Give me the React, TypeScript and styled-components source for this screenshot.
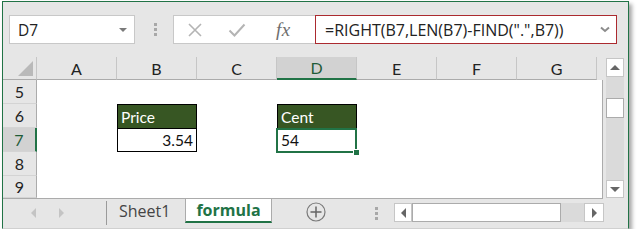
import React from 'react';
import styled, { createGlobalStyle } from 'styled-components';

const GREEN = '#217346';

const columns = ['A', 'B', 'C', 'D', 'E', 'F', 'G'];
const rows = [
  { n: 5, h: 24 },
  { n: 6, h: 24 },
  { n: 7, h: 24 },
  { n: 8, h: 24 },
  { n: 9, h: 22 },
];

type CellData = { text: string; kind: 'head' | 'value'; align?: 'left' | 'right' };

const cells: Record<string, CellData> = {
  B6: { text: 'Price', kind: 'head' },
  B7: { text: '3.54', kind: 'value', align: 'right' },
  D6: { text: 'Cent', kind: 'head' },
  D7: { text: '54', kind: 'value' },
};

const activeCol = 'D';
const activeRow = 7;

const GlobalStyle = createGlobalStyle`
  body {
    margin: 0;
    background: #fff;
    font-family: "Open Sans", "Noto Sans", sans-serif;
  }
  * { box-sizing: border-box; }
`;

const Window = styled.div`
  margin: 1px 0 0 2px;
  width: 627px;
  height: 228px;
  border: 1px solid ${GREEN};
  border-bottom: 1px solid #d0d0d0;
  background: #e6e6e6;
  box-shadow: 3px 3px 4px rgba(0, 0, 0, 0.35);
  display: flex;
  flex-direction: column;
`;

const FormulaBar = styled.div`
  height: 55px;
  display: flex;
  align-items: flex-start;
  padding: 13px 0 0 6px;
`;

const NameBox = styled.div`
  width: 126px;
  height: 29px;
  background: #fff;
  border: 1px solid #c8c8c8;
  display: flex;
  align-items: center;
  justify-content: space-between;
  padding: 0 7px 0 8px;
  font-size: 15.5px;
  color: #222;
`;

const Caret = styled.span`
  width: 0;
  height: 0;
  border-left: 4px solid transparent;
  border-right: 4px solid transparent;
  border-top: 4px solid #7a7a7a;
`;

const Grip = styled.div<{ $gap: number }>`
  display: flex;
  flex-direction: column;
  gap: 2px;
  margin: 8px 0 0 ${p => p.$gap}px;
  & > span {
    width: 3px;
    height: 3px;
    background: #a8a8a8;
  }
`;

const FxBox = styled.div`
  width: 142px;
  height: 29px;
  margin-left: 16px;
  background: #fff;
  border: 1px solid #c8c8c8;
  border-right: none;
  display: flex;
  align-items: center;
  padding-left: 13px;
`;

const IconSlot = styled.span<{ $w: number }>`
  width: ${p => p.$w}px;
  display: flex;
  align-items: center;
`;

const Fx = styled.span`
  font-family: "Liberation Serif", "DejaVu Serif", serif;
  font-style: italic;
  font-size: 19px;
  color: #6e6e6e;
  letter-spacing: 0.5px;
`;

const FormulaInput = styled.div`
  width: 302px;
  height: 29px;
  background: #fff;
  border: 1px solid #ab2a2f;
  display: flex;
  align-items: center;
  justify-content: space-between;
  padding: 0 6px 0 9px;
  font-size: 16px;
  color: #222;
`;

const Main = styled.div`
  height: 142px;
  display: flex;
`;

const Sheet = styled.div`
  width: 600px;
  display: flex;
  flex-direction: column;
`;

const HeaderRow = styled.div`
  height: 23px;
  display: flex;
`;

const Corner = styled.div`
  width: 34px;
  border-right: 1px solid #c6c6c6;
  border-bottom: 1px solid #ababab;
  position: relative;
  overflow: hidden;
  &::after {
    content: '';
    position: absolute;
    right: 3px;
    bottom: 3px;
    border-left: 15px solid transparent;
    border-bottom: 15px solid #b9b9b9;
  }
`;

const ColHeader = styled.div<{ $active: boolean }>`
  width: 80px;
  display: flex;
  align-items: center;
  justify-content: center;
  font-family: Lato, "Liberation Sans", sans-serif;
  font-size: 16px;
  color: ${p => (p.$active ? '#1f5c38' : '#222')};
  background: ${p => (p.$active ? '#d2d2d2' : '#e6e6e6')};
  border-right: 1px solid #c6c6c6;
  border-bottom: ${p => (p.$active ? `2px solid ${GREEN}` : '1px solid #ababab')};
`;

const HeaderFiller = styled.div`
  flex: 1;
`;

const Body = styled.div`
  flex: 1;
  display: flex;
  border-bottom: 1px solid #ababab;
`;

const RowHeaders = styled.div`
  width: 34px;
  display: flex;
  flex-direction: column;
`;

const RowHeader = styled.div<{ $h: number; $active: boolean }>`
  height: ${p => p.$h}px;
  display: flex;
  align-items: center;
  justify-content: center;
  font-family: Lato, "Liberation Sans", sans-serif;
  font-size: 16px;
  color: ${p => (p.$active ? '#1f5c38' : '#222')};
  background: ${p => (p.$active ? '#d2d2d2' : '#e6e6e6')};
  border-bottom: 1px solid #d4d4d4;
  border-right: ${p => (p.$active ? `2px solid ${GREEN}` : '1px solid #ababab')};
`;

const Cells = styled.div`
  flex: 1;
  background: #fff;
  border-right: 1px solid #ababab;
  display: flex;
  flex-direction: column;
`;

const CellRow = styled.div<{ $h: number }>`
  height: ${p => p.$h}px;
  display: flex;
`;

const Cell = styled.div<{ $kind?: 'head' | 'value'; $align?: 'left' | 'right'; $selected: boolean }>`
  width: 80px;
  position: relative;
  display: flex;
  align-items: center;
  justify-content: ${p => (p.$align === 'right' ? 'flex-end' : 'flex-start')};
  padding: 0 3px 0 3px;
  font-family: Lato, "Liberation Sans", sans-serif;
  font-size: 15.5px;
  color: ${p => (p.$kind === 'head' ? '#fff' : '#111')};
  background: ${p => (p.$kind === 'head' ? '#375623' : 'transparent')};
  border: ${p => (p.$kind ? '1px solid #000' : 'none')};
  border-bottom: ${p => (p.$kind === 'value' ? '1px solid #000' : 'none')};
  ${p =>
    p.$selected &&
    `
    &::after {
      content: '';
      position: absolute;
      top: -1px;
      left: -2px;
      right: -1px;
      bottom: -2px;
      border: 2px solid ${GREEN};
    }
  `}
`;

const FillHandle = styled.span`
  position: absolute;
  right: -4px;
  bottom: -5px;
  width: 7px;
  height: 7px;
  background: ${GREEN};
  border: 1px solid #fff;
  z-index: 1;
`;

const VScroll = styled.div`
  width: 24px;
  padding: 1px 3px 1px 3px;
  display: flex;
`;

const Track = styled.div<{ $dir: 'column' | 'row' }>`
  flex: 1;
  display: flex;
  flex-direction: ${p => p.$dir};
  background: #dadada;
`;

const ScrollButton = styled.div<{ $w?: number; $h?: number }>`
  width: ${p => (p.$w ? `${p.$w}px` : 'auto')};
  height: ${p => (p.$h ? `${p.$h}px` : 'auto')};
  background: #fff;
  border: 1px solid #c6c6c6;
  display: flex;
  align-items: center;
  justify-content: center;
`;

const Thumb = styled.div<{ $w?: number; $h?: number }>`
  width: ${p => (p.$w ? `${p.$w}px` : 'auto')};
  height: ${p => (p.$h ? `${p.$h}px` : 'auto')};
  background: #fff;
  border: 1px solid #ababab;
`;

const Spacer = styled.div<{ $size?: number }>`
  flex: ${p => (p.$size ? `0 0 ${p.$size}px` : 1)};
`;

const Arrow = styled.span<{ $dir: 'up' | 'down' | 'left' | 'right'; $color?: string }>`
  width: 0;
  height: 0;
  ${p => {
    const c = p.$color || '#666';
    switch (p.$dir) {
      case 'up':
        return `border-left: 5px solid transparent; border-right: 5px solid transparent; border-bottom: 5px solid ${c};`;
      case 'down':
        return `border-left: 5px solid transparent; border-right: 5px solid transparent; border-top: 5px solid ${c};`;
      case 'left':
        return `border-top: 5px solid transparent; border-bottom: 5px solid transparent; border-right: 5px solid ${c};`;
      default:
        return `border-top: 5px solid transparent; border-bottom: 5px solid transparent; border-left: 5px solid ${c};`;
    }
  }}
`;

const TabBar = styled.div`
  flex: 1;
  display: flex;
  align-items: flex-start;
`;

const TabNav = styled.div`
  width: 103px;
  height: 27px;
  display: flex;
  align-items: center;
  padding-left: 28px;
  gap: 23px;
`;

const TabDivider = styled.div`
  width: 1px;
  height: 24px;
  margin-top: 2px;
  background: #9a9a9a;
`;

const SheetTab = styled.div<{ $active: boolean }>`
  width: ${p => (p.$active ? 87 : 78)}px;
  height: 24px;
  display: flex;
  align-items: center;
  justify-content: ${p => (p.$active ? 'center' : 'flex-start')};
  padding-left: ${p => (p.$active ? 0 : 12)}px;
  font-size: 16px;
  font-weight: ${p => (p.$active ? 700 : 400)};
  color: ${p => (p.$active ? GREEN : '#444')};
  background: ${p => (p.$active ? '#fff' : 'transparent')};
  border-left: ${p => (p.$active ? '1px solid #ababab' : 'none')};
  border-right: ${p => (p.$active ? '1px solid #ababab' : 'none')};
  border-bottom: ${p => (p.$active ? `2px solid ${GREEN}` : 'none')};
`;

const AddSheet = styled.div`
  margin: 3px 0 0 34px;
  width: 20px;
  height: 20px;
  display: flex;
`;

const HScroll = styled.div`
  margin: 4px 0 0 16px;
  width: 210px;
  height: 19px;
  display: flex;
`;

const XIcon = () => (
  <svg width="16" height="14" viewBox="0 0 16 14">
    <path d="M2 1 L14 13 M14 1 L2 13" stroke="#b4b4b4" strokeWidth="1.6" fill="none" />
  </svg>
);

const CheckIcon = () => (
  <svg width="18" height="14" viewBox="0 0 18 14">
    <path d="M1.5 7.5 L6.5 12.5 L16.5 1.5" stroke="#b4b4b4" strokeWidth="2" fill="none" />
  </svg>
);

const ChevronDown = () => (
  <svg width="10" height="7" viewBox="0 0 10 7">
    <path d="M1 1.5 L5 5 L9 1.5" stroke="#8c8c8c" strokeWidth="2" fill="none" />
  </svg>
);

const PlusCircle = () => (
  <svg width="20" height="20" viewBox="0 0 20 20">
    <circle cx="10" cy="10" r="9" stroke="#7a7a7a" strokeWidth="1.2" fill="none" />
    <path d="M10 4.5 V15.5 M4.5 10 H15.5" stroke="#666" strokeWidth="1.5" />
  </svg>
);

const App: React.FC = () => (
  <>
    <GlobalStyle />
    <Window>
      <FormulaBar>
        <NameBox>
          <span>D7</span>
          <Caret />
        </NameBox>
        <Grip $gap={19}>
          <span />
          <span />
          <span />
        </Grip>
        <FxBox>
          <IconSlot $w={41}>
            <XIcon />
          </IconSlot>
          <IconSlot $w={48}>
            <CheckIcon />
          </IconSlot>
          <Fx>fx</Fx>
        </FxBox>
        <FormulaInput>
          <span>=RIGHT(B7,LEN(B7)-FIND(".",B7))</span>
          <ChevronDown />
        </FormulaInput>
      </FormulaBar>

      <Main>
        <Sheet>
          <HeaderRow>
            <Corner />
            {columns.map(c => (
              <ColHeader key={c} $active={c === activeCol}>
                {c}
              </ColHeader>
            ))}
            <HeaderFiller />
          </HeaderRow>
          <Body>
            <RowHeaders>
              {rows.map(r => (
                <RowHeader key={r.n} $h={r.h} $active={r.n === activeRow}>
                  {r.n}
                </RowHeader>
              ))}
            </RowHeaders>
            <Cells>
              {rows.map(r => (
                <CellRow key={r.n} $h={r.h}>
                  {columns.map(c => {
                    const id = `${c}${r.n}`;
                    const data = cells[id];
                    const selected = c === activeCol && r.n === activeRow;
                    return (
                      <Cell key={id} $kind={data?.kind} $align={data?.align} $selected={selected}>
                        {data?.text}
                        {selected && <FillHandle />}
                      </Cell>
                    );
                  })}
                </CellRow>
              ))}
            </Cells>
          </Body>
        </Sheet>
        <VScroll>
          <Track $dir="column">
            <ScrollButton $h={19}>
              <Arrow $dir="up" />
            </ScrollButton>
            <Spacer $size={21} />
            <Thumb $h={20} />
            <Spacer />
            <ScrollButton $h={18}>
              <Arrow $dir="down" />
            </ScrollButton>
          </Track>
        </VScroll>
      </Main>

      <TabBar>
        <TabNav>
          <Arrow $dir="left" $color="#c4c4c4" />
          <Arrow $dir="right" $color="#c4c4c4" />
        </TabNav>
        <TabDivider />
        <SheetTab $active={false}>Sheet1</SheetTab>
        <SheetTab $active>formula</SheetTab>
        <AddSheet>
          <PlusCircle />
        </AddSheet>
        <Grip $gap={49}>
          <span />
          <span />
          <span />
        </Grip>
        <HScroll>
          <Track $dir="row">
            <ScrollButton $w={18}>
              <Arrow $dir="left" />
            </ScrollButton>
            <Thumb $w={149} />
            <Spacer />
            <ScrollButton $w={20}>
              <Arrow $dir="right" />
            </ScrollButton>
          </Track>
        </HScroll>
      </TabBar>
    </Window>
  </>
);

export default App;
